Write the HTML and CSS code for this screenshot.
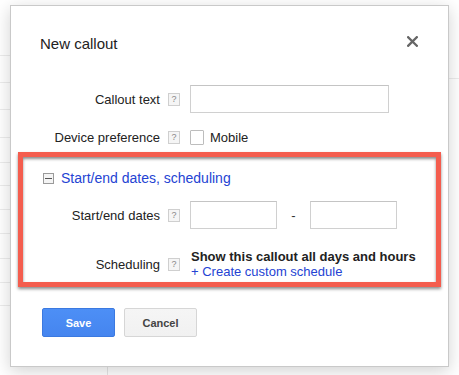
FILE: index.html
```html
<!DOCTYPE html>
<html>
<head>
<meta charset="utf-8">
<link rel="stylesheet" href="styles.css">
</head>
<body>
<div class="dialog">
  <div class="dialog-head">
    <div class="title">New callout</div>
    <button class="close" aria-label="Close">
      <svg width="11" height="11" viewBox="0 0 11 11"><path d="M1.2 1.2 L9.8 9.8 M9.8 1.2 L1.2 9.8" stroke="#666" stroke-width="2.3" stroke-linecap="square"/></svg>
    </button>
  </div>

  <div class="row row-text">
    <div class="label">Callout text</div>
    <span class="help">?</span>
    <input class="input input-wide" type="text">
  </div>

  <div class="row row-device">
    <div class="label">Device preference</div>
    <span class="help">?</span>
    <span class="checkbox"></span>
    <span class="check-label">Mobile</span>
  </div>

  <div class="section">
    <div class="section-head">
      <span class="toggle"><span class="toggle-bar"></span></span>
      <a class="section-link">Start/end dates, scheduling</a>
    </div>
    <div class="row row-dates">
      <div class="label label-in">Start/end dates</div>
      <span class="help">?</span>
      <input class="input input-date" type="text">
      <span class="dash">-</span>
      <input class="input input-date" type="text">
    </div>
    <div class="row row-sched">
      <div class="label label-in">Scheduling</div>
      <span class="help">?</span>
      <div class="sched">
        <div class="sched-bold">Show this callout all days and hours</div>
        <a class="sched-link">+ Create custom schedule</a>
      </div>
    </div>
  </div>

  <div class="buttons">
    <button class="btn btn-save">Save</button>
    <button class="btn btn-cancel">Cancel</button>
  </div>
</div>
</body>
</html>
```

FILE: styles.css
```css
html, body {
  margin: 0;
  padding: 0;
}
body {
  width: 459px;
  height: 375px;
  overflow: hidden;
  font-family: "Liberation Sans", Arial, sans-serif;
  color: #222;
  background-color: #fff;
  background-image:
    linear-gradient(#ececec, #ececec),
    linear-gradient(#ececec, #ececec),
    linear-gradient(#ececec, #ececec),
    linear-gradient(#ececec, #ececec),
    linear-gradient(#ececec, #ececec),
    linear-gradient(#ececec, #ececec),
    linear-gradient(#ececec, #ececec),
    linear-gradient(#ececec, #ececec),
    linear-gradient(#ececec, #ececec),
    linear-gradient(#ececec, #ececec),
    linear-gradient(#ececec, #ececec),
    linear-gradient(#ececec, #ececec),
    linear-gradient(#e6e6e6, #e6e6e6);
  background-repeat: no-repeat;
  background-size:
    10px 1px, 10px 1px, 10px 1px, 10px 1px, 10px 1px, 10px 1px,
    10px 1px, 10px 1px, 10px 1px, 10px 1px, 10px 1px,
    10px 1px, 1px 10px;
  background-position:
    0 55px, 0 82px, 0 109px, 0 137px, 0 162px, 0 185px,
    0 209px, 0 233px, 0 258px, 0 282px, 0 305px,
    449px 78px, 107px 367px;
  padding-top: 5px;
  box-sizing: border-box;
}

.dialog {
  margin-left: 10px;
  width: 439px;
  box-sizing: border-box;
  background: #fff;
  border: 1px solid #c9c9c9;
  box-shadow: 0 4px 16px rgba(0, 0, 0, 0.18);
  padding: 29px 0 29px 0;
}

.dialog-head {
  display: flex;
  justify-content: space-between;
  align-items: flex-start;
  padding: 0 30px 0 29px;
}
.title {
  font-size: 15px;
  line-height: 18px;
  color: #222;
}
.close {
  border: 0;
  background: none;
  padding: 0;
  margin-top: 1px;
  width: 11px;
  height: 11px;
  display: block;
}
.close svg { display: block; }

.row {
  display: flex;
  align-items: center;
  font-size: 13px;
}
.label {
  width: 149px;
  text-align: right;
  color: #222;
  flex: none;
}
.label-in {
  width: 137px;
}
.help {
  flex: none;
  box-sizing: border-box;
  width: 12px;
  height: 13px;
  margin: 0 10px 0 8px;
  border: 1px solid #cfcfcf;
  background: #f5f5f5;
  color: #888;
  font-size: 9px;
  line-height: 11px;
  text-align: center;
}

.row-text {
  margin-top: 32px;
  height: 28px;
}
.input {
  box-sizing: border-box;
  height: 28px;
  border: 1px solid #d0d0d0;
  border-top-color: #c4c4c4;
  background: #fff;
  margin: 0;
  padding: 0 6px;
  font: inherit;
}
.input-wide { width: 199px; }
.input-date { width: 87px; }

.row-device {
  margin-top: 16px;
  height: 16px;
}
.checkbox {
  flex: none;
  box-sizing: border-box;
  width: 14px;
  height: 15px;
  border: 1px solid #bdbdbd;
  border-radius: 1px;
  background: #fff;
}
.check-label {
  margin-left: 6px;
}

.section {
  margin: 7px 7px 0 7px;
  border: 5px solid #f45d4e;
  box-shadow: 0 2px 3px rgba(0, 0, 0, 0.45), inset 0 2px 3px rgba(0, 0, 0, 0.45);
  padding: 13px 0 3px 0;
}
.section-head {
  display: flex;
  align-items: center;
  height: 16px;
  padding-left: 20px;
}
.toggle {
  box-sizing: border-box;
  width: 11px;
  height: 11px;
  border: 1px solid #9a9a9a;
  background: #f4f4f4;
  display: flex;
  align-items: center;
  justify-content: center;
}
.toggle-bar {
  width: 7px;
  height: 1px;
  background: #555;
}
.section-link {
  margin-left: 7px;
  font-size: 14px;
  color: #2443d3;
}

.row-dates {
  margin-top: 15px;
  height: 28px;
}
.dash {
  width: 33px;
  text-align: center;
  color: #333;
}

.row-sched {
  margin-top: 20px;
}
.sched {
  line-height: 15px;
  padding-left: 1px;
}
.sched-bold {
  font-weight: bold;
  color: #222;
}
.sched-link {
  display: block;
  color: #2443d3;
}

.buttons {
  display: flex;
  gap: 9px;
  margin: 21px 0 0 31px;
}
.btn {
  box-sizing: border-box;
  width: 73px;
  height: 29px;
  border-radius: 2px;
  font-family: "Liberation Sans", Arial, sans-serif;
  font-size: 11px;
  font-weight: bold;
  padding: 0;
}
.btn-save {
  color: #fff;
  background: linear-gradient(#4d8ff6, #4585ef);
  border: 1px solid #3b79e0;
}
.btn-cancel {
  color: #444;
  background: linear-gradient(#f5f5f5, #f1f1f1);
  border: 1px solid #d6d6d6;
}
```
